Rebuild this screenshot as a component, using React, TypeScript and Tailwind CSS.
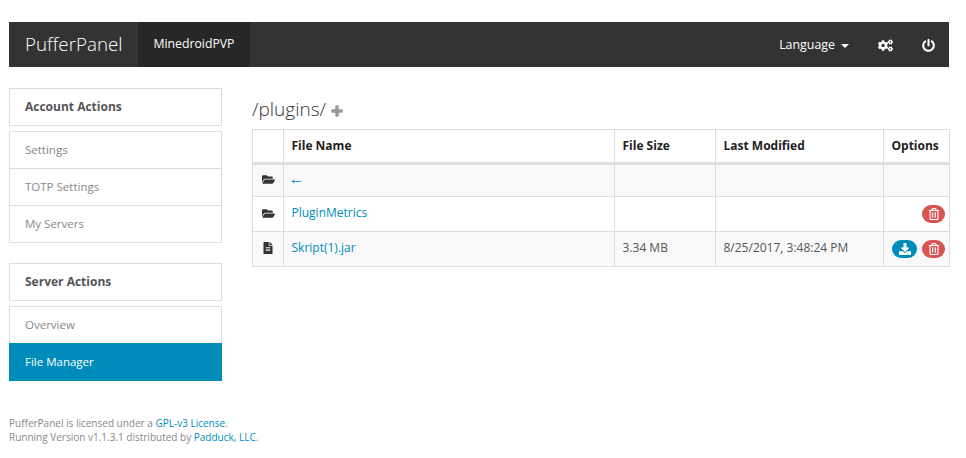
import { FaCogs, FaDownload, FaFileAlt, FaFolderOpen, FaPlus, FaPowerOff, FaRegTrashAlt } from "react-icons/fa";

const accountLinks = ["Settings", "TOTP Settings", "My Servers"];

function SideHeading({ title }: { title: string }) {
  return (
    <div className="flex h-[38px] items-center border border-[#dddddd] px-[15px] text-[12px] font-bold text-[#555555]">
      {title}
    </div>
  );
}

function SideLink({ label, active }: { label: string; active?: boolean }) {
  return (
    <a
      className={
        active
          ? "-mt-px flex h-[38px] items-center bg-[#008cba] px-[16px] text-[11.5px] text-white"
          : "-mt-px flex h-[38px] items-center border border-[#dddddd] px-[15px] text-[11.5px] text-[#888888]"
      }
    >
      {label}
    </a>
  );
}

function Pill({ color, children }: { color: string; children: React.ReactNode }) {
  return (
    <span className={`inline-flex h-[18px] items-center justify-center rounded-full text-[12px] text-white ${color}`}>
      {children}
    </span>
  );
}

export default function App() {
  return (
    <div className="min-h-[458px] bg-white pl-[9px] pr-[17px] pt-[22px] font-['Open_Sans',sans-serif]">
      {/* Navbar */}
      <nav className="flex h-[45px] items-stretch bg-[#333333] text-white">
        <a className="flex w-[129px] items-center pl-[16px] text-[18.8px] font-light">PufferPanel</a>
        <a className="flex w-[112px] items-center justify-center bg-[#272727] text-[12.25px]">MinedroidPVP</a>
        <div className="ml-auto flex items-center pt-[1px] text-[12.4px]">
          <span className="flex items-center">
            Language
            <span className="ml-[6px] mt-[2px] h-0 w-0 border-x-[4px] border-t-[4px] border-x-transparent border-t-white" />
          </span>
          <FaCogs className="ml-[29px] text-[15px]" />
          <FaPowerOff className="ml-[29px] mr-[14px] text-[13px]" />
        </div>
      </nav>

      <div className="mt-[21px] flex">
        {/* Sidebar */}
        <aside className="w-[213px] shrink-0">
          <SideHeading title="Account Actions" />
          <div className="mt-[6px]">
            {accountLinks.map((label) => (
              <SideLink key={label} label={label} />
            ))}
          </div>
          <div className="mt-[20px]">
            <SideHeading title="Server Actions" />
          </div>
          <div className="mt-[6px]">
            <SideLink label="Overview" />
            <SideLink label="File Manager" active />
          </div>
        </aside>

        {/* File list */}
        <main className="ml-[30px] flex-1">
          <h3 className="mb-[6px] mt-[7px] flex h-[28px] items-center text-[19px] font-light leading-none text-[#333333]">
            /plugins/
            <FaPlus stroke="currentColor" strokeWidth={50} className="ml-[5px] mt-[3px] text-[12px] text-[#999999]" />
          </h3>
          <table className="w-full table-fixed border-collapse text-[12px] text-[#555555]">
            <colgroup>
              <col className="w-[31px]" />
              <col className="w-[331px]" />
              <col className="w-[101px]" />
              <col className="w-[168px]" />
              <col className="w-[66px]" />
            </colgroup>
            <thead>
              <tr className="h-[34px] font-bold text-[#222222]">
                <th className="border border-b-[3px] border-[#dddddd]" />
                <th className="border border-b-[3px] border-[#dddddd] px-[7.5px] text-left">File Name</th>
                <th className="border border-b-[3px] border-[#dddddd] px-[7.5px] text-left">File Size</th>
                <th className="border border-b-[3px] border-[#dddddd] px-[7.5px] text-left">Last Modified</th>
                <th className="border border-b-[3px] border-[#dddddd] px-[7.5px] text-left">Options</th>
              </tr>
            </thead>
            <tbody>
              <tr className="h-[33px] bg-[#f9f9f9]">
                <td className="border border-[#dddddd] pb-[3px] text-center">
                  <FaFolderOpen className="inline-block text-[13px] text-[#333333]" />
                </td>
                <td className="border border-[#dddddd] px-[7.5px] pb-[2px] font-['Liberation_Sans',sans-serif] text-[#008cba]">
                  <span className="-ml-[3px] text-[16px] leading-none">←</span>
                </td>
                <td className="border border-[#dddddd]" />
                <td className="border border-[#dddddd]" />
                <td className="border border-[#dddddd]" />
              </tr>
              <tr className="h-[35px]">
                <td className="border border-[#dddddd] pb-[3px] text-center">
                  <FaFolderOpen className="inline-block text-[13px] text-[#333333]" />
                </td>
                <td className="border border-[#dddddd] px-[7.5px] pb-[2px] text-[#008cba]">PluginMetrics</td>
                <td className="border border-[#dddddd]" />
                <td className="border border-[#dddddd]" />
                <td className="border border-[#dddddd] pr-[4px] text-right">
                  <div className="flex justify-end">
                    <Pill color="w-[23px] bg-[#d9534f]">
                      <FaRegTrashAlt />
                    </Pill>
                  </div>
                </td>
              </tr>
              <tr className="h-[35px] bg-[#f9f9f9]">
                <td className="border border-[#dddddd] pb-[3px] text-center">
                  <FaFileAlt className="inline-block text-[12px] text-[#333333]" />
                </td>
                <td className="border border-[#dddddd] px-[7.5px] pb-[2px] text-[#008cba]">Skript(1).jar</td>
                <td className="border border-[#dddddd] px-[7.5px] pb-[2px]">3.34 MB</td>
                <td className="border border-[#dddddd] px-[7.5px] pb-[2px]">8/25/2017, 3:48:24 PM</td>
                <td className="border border-[#dddddd] pr-[4px]">
                  <div className="flex justify-end gap-[5px]">
                    <Pill color="w-[25px] bg-[#008cba]">
                      <FaDownload />
                    </Pill>
                    <Pill color="w-[23px] bg-[#d9534f]">
                      <FaRegTrashAlt />
                    </Pill>
                  </div>
                </td>
              </tr>
            </tbody>
          </table>
        </main>
      </div>

      {/* Footer */}
      <footer className="mt-[35px] text-[10px] leading-[14px] text-[#888888]">
        <p>
          PufferPanel is licensed under a <a className="text-[#008cba]">GPL-v3 License</a>.
        </p>
        <p>
          Running Version v1.1.3.1 distributed by <a className="text-[#008cba]">Padduck, LLC</a>.
        </p>
      </footer>
    </div>
  );
}
